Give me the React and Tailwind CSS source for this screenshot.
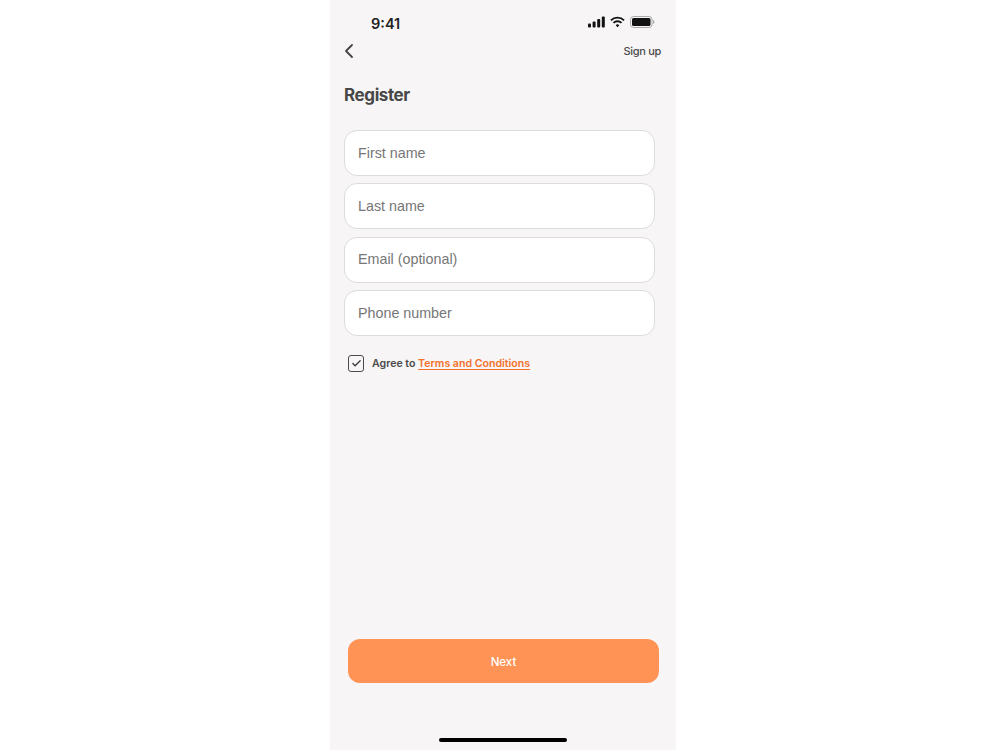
import React from 'react';
import { ChevronLeft, Check } from 'lucide-react';

const fields = ['First name', 'Last name', 'Email (optional)', 'Phone number'];

const StatusIcons = () => (
    <div className="flex items-center gap-[4px]">
        <svg width="18" height="12" viewBox="0 0 18 12" fill="#111">
            <rect x="0" y="7.5" width="3" height="4" rx="1" />
            <rect x="4.6" y="5.5" width="3" height="6" rx="1" />
            <rect x="9.2" y="3" width="3" height="8.5" rx="1" />
            <rect x="13.8" y="0.5" width="3" height="11" rx="1" />
        </svg>
        <svg width="15" height="12" viewBox="0 0 16 12" fill="none" stroke="#111" strokeWidth="2">
            <path d="M1 4.2a10 10 0 0 1 14 0" />
            <path d="M3.7 7a6.2 6.2 0 0 1 8.6 0" />
            <path d="M8 11.500 6.100 9.400a2.800 2.800 0 0 1 3.800 0z" fill="#111" stroke="none" />
        </svg>
        <svg width="25" height="12" viewBox="0 0 25 12" fill="none" className="ml-[1px]">
            <rect x="0.5" y="0.5" width="21.500" height="11" rx="3" stroke="#aaa" />
            <rect x="2" y="2" width="18.500" height="8" rx="1.600" fill="#111" />
            <path d="M23 4v4c.8-.3 1.400-1 1.400-2s-.6-1.700-1.400-2z" fill="#aaa" />
        </svg>
    </div>
);

const App = () => {
    return (
        <div className="w-[1000px] h-[750px] bg-white overflow-hidden" style={{ fontFamily: 'Inter, sans-serif' }}>
            <div className="ml-[330px] w-[346px] h-[750px] bg-[#f7f5f6] flex flex-col">
                {/* Status bar */}
                <div className="h-[40px] pt-[15px] pl-[41px] pr-[21px] flex items-start justify-between">
                    <span className="text-[14.5px] leading-[18px] font-semibold text-[#222]">9:41</span>
                    <div className="pt-[1px]">
                        <StatusIcons />
                    </div>
                </div>

                {/* Nav */}
                <div className="h-[22px] pl-[7px] pr-[15px] flex items-center justify-between">
                    <ChevronLeft size={24} strokeWidth={1.8} className="text-[#444]" />
                    <span className="text-[11px] font-medium tracking-[-0.3px] text-[#4a4a4a] mt-[1px]">Sign up</span>
                </div>

                <h1 className="mt-[22px] ml-[14px] text-[17px] leading-[22px] font-bold tracking-[-0.4px] text-[#474747]">Register</h1>

                {/* Form */}
                <div className="mt-[24px] ml-[14px] w-[311px] flex flex-col gap-[7.3px]">
                    {fields.map((f) => (
                        <div
                            key={f}
                            className="h-[46px] px-[13px] pt-[1px] flex items-center bg-white border border-[#dcdcdc] rounded-[13px] text-[14.3px] text-[#767676]"
                            style={{ fontFamily: '"Liberation Sans", sans-serif' }}
                        >
                            {f}
                        </div>
                    ))}
                </div>

                <div className="mt-[19px] ml-[18px] flex items-center gap-[8px]">
                    <div className="w-[16px] h-[17px] border-[1.5px] border-[#4a4a4a] rounded-[3px] flex items-center justify-center">
                        <Check size={11} strokeWidth={2.6} className="text-[#333]" />
                    </div>
                    <p className="pt-[1px] text-[10.6px] font-semibold text-[#4a4a4a]">
                        Agree to <span className="text-[#f2702a] underline underline-offset-2">Terms and Conditions</span>
                    </p>
                </div>

                <div className="flex-1" />

                <button className="ml-[18px] w-[311px] h-[44px] bg-[#ff9355] rounded-[12px] text-[11.5px] font-medium text-white pt-[3px]">
                    Next
                </button>

                <div className="mt-[55px] mb-[8px] ml-[109px] w-[128px] h-[4px] bg-black rounded-full" />
            </div>
        </div>
    );
};

export default App;
